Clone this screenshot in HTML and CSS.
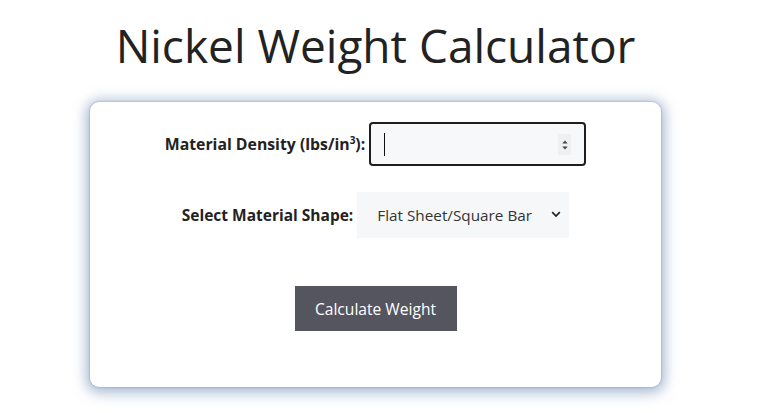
FILE: index.html
```html
<!DOCTYPE html>
<html lang="en">
<head>
    <meta charset="UTF-8">
    <meta name="viewport" content="width=device-width, initial-scale=1.0">
    <title>Nickel Weight Calculator</title>
    <link rel="stylesheet" href="styles.css">
</head>
<body>
    <div class="page">
        <h1 class="title">Nickel Weight Calculator</h1>

        <div class="calculator">
            <div class="row">
                <label for="density">Material Density (lbs/in<sup>3</sup>):</label>
                <div class="field">
                    <input type="text" id="density" class="number-input">
                    <span class="caret"></span>
                    <span class="spinner">
                        <svg width="8" height="14" viewBox="0 0 8 14">
                            <path d="M1.3 5.6 L4 2.4 L6.7 5.6 Z" fill="#444"/>
                            <path d="M1.3 8.4 L4 11.6 L6.7 8.4 Z" fill="#444"/>
                        </svg>
                    </span>
                </div>
            </div>

            <div class="row">
                <label for="shape" class="shape-label">Select Material Shape:</label>
                <div class="field">
                    <select id="shape" class="shape-select">
                        <option>Flat Sheet/Square Bar</option>
                        <option>Round Bar</option>
                        <option>Tube</option>
                    </select>
                    <svg class="chevron" width="10" height="7" viewBox="0 0 10 7">
                        <path d="M1.2 1.2 L5 5 L8.8 1.2" fill="none" stroke="#222" stroke-width="1.7"/>
                    </svg>
                </div>
            </div>

            <button class="calc-btn">Calculate Weight</button>
        </div>
    </div>
</body>
</html>
```

FILE: styles.css
```css
body {
    font-family: "Open Sans", "Noto Sans", sans-serif;
    margin: 0;
    background-color: #fff;
    color: #212121;
}

.page {
    width: 751px;
    padding-bottom: 20px;
}

.title {
    font-weight: 400;
    font-size: 46px;
    text-align: center;
    margin: 14px 0 0;
    line-height: 62px;
    color: #222;
}

.calculator {
    width: 571px;
    height: 285px;
    box-sizing: border-box;
    margin: 26px 0 0 90px;
    background-color: #fff;
    border-radius: 9px;
    box-shadow: 0 0 2px rgba(90, 115, 150, 0.6), 0 2px 14px 3px rgba(95, 130, 175, 0.6);
    padding-top: 20px;
    display: flex;
    flex-direction: column;
    align-items: center;
}

.row {
    display: flex;
    align-items: center;
    justify-content: center;
    gap: 4px;
}

.row + .row {
    margin-top: 26px;
}

.row label {
    font-weight: 700;
    font-size: 15.8px;
    color: #222;
}

.row .shape-label {
    font-size: 15.5px;
}

.row label sup {
    font-size: 10px;
    line-height: 0;
}

.field {
    position: relative;
}

.number-input {
    width: 217px;
    height: 44px;
    box-sizing: border-box;
    border: 2px solid #1e1e1e;
    border-radius: 4px;
    background-color: #f7f8fa;
    padding: 0 12px;
    font: inherit;
    outline: none;
}

.caret {
    position: absolute;
    left: 15px;
    top: 11px;
    width: 1px;
    height: 23px;
    background-color: #111;
}

.spinner {
    position: absolute;
    right: 15px;
    top: 12px;
    width: 13px;
    height: 21px;
    background-color: #eef0f2;
    display: flex;
    align-items: center;
    justify-content: center;
}

.shape-select {
    appearance: none;
    width: 212px;
    height: 46px;
    border: none;
    border-radius: 0;
    background-color: #f6f7f9;
    padding: 0 20px;
    font: inherit;
    font-size: 15.3px;
    color: #333;
}

.chevron {
    position: absolute;
    right: 8px;
    top: 19px;
}

.calc-btn {
    margin-top: 48px;
    width: 162px;
    height: 45px;
    border: none;
    background-color: #55555f;
    color: #fff;
    font: inherit;
    font-size: 15.6px;
}
```
